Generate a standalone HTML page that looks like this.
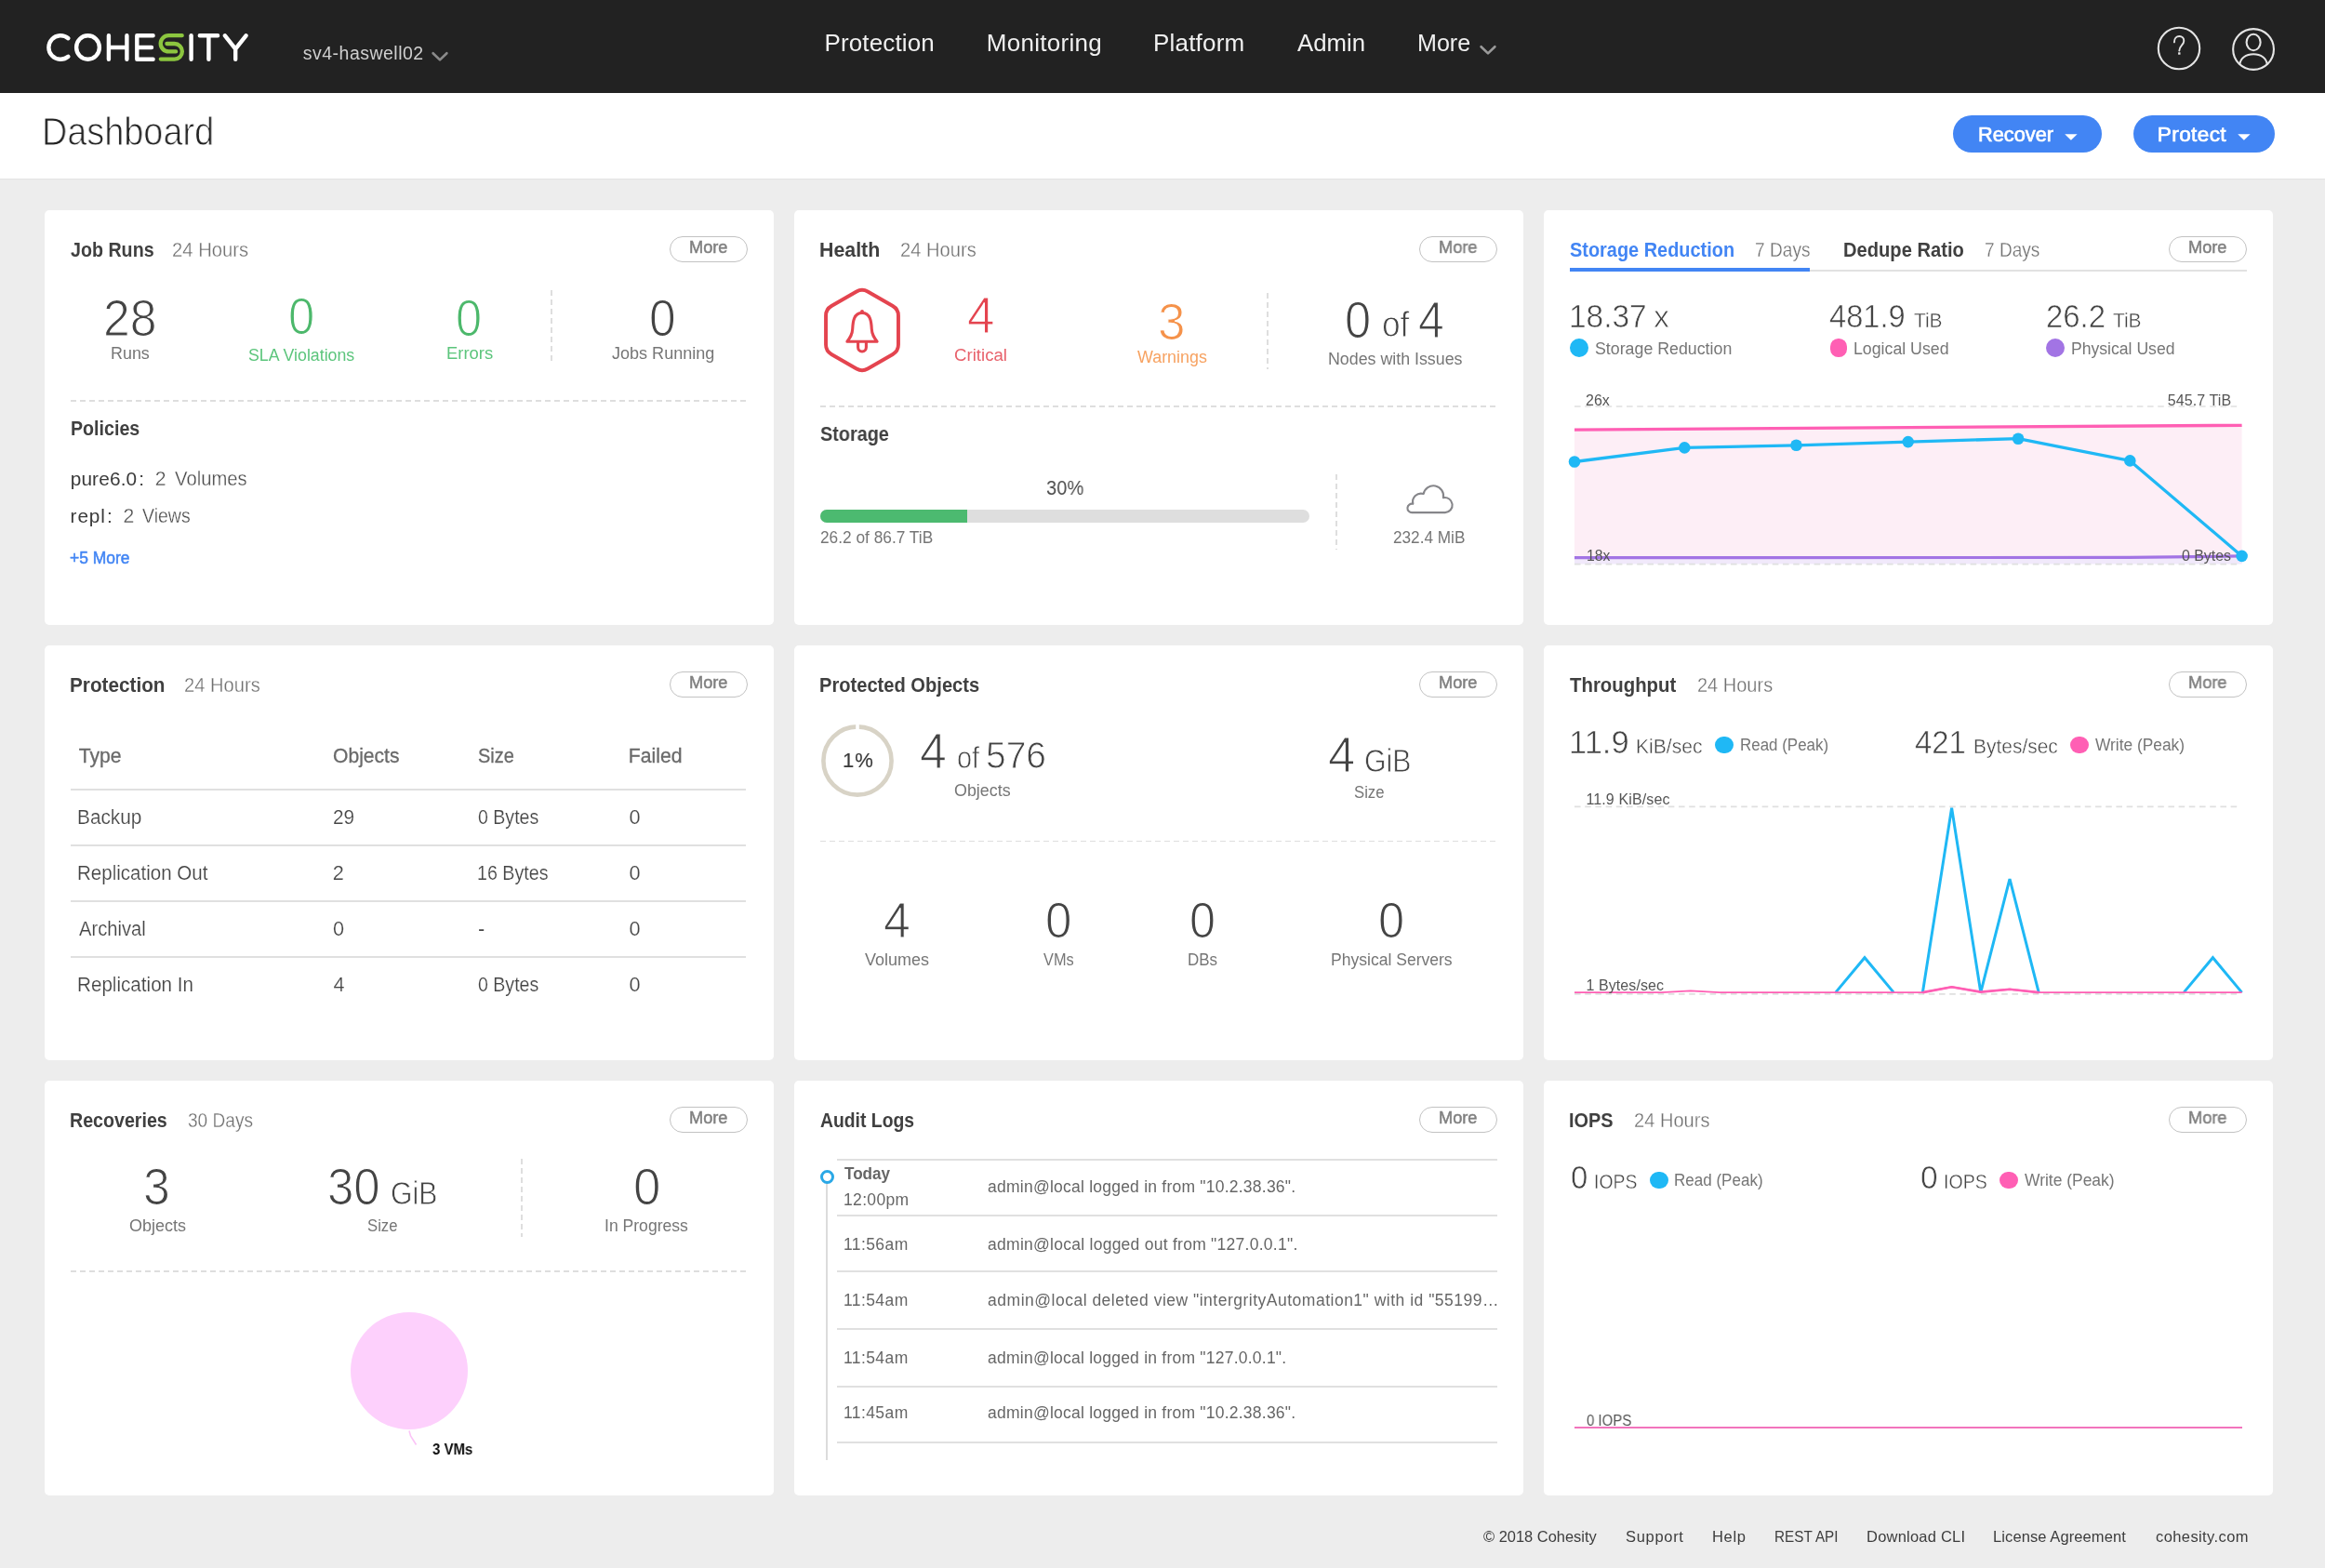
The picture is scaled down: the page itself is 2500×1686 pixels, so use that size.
<!DOCTYPE html>
<html lang="en"><head><meta charset="utf-8"><title>Cohesity Dashboard</title>
<style>
html,body{margin:0;padding:0}
body{width:2500px;height:1686px;overflow:hidden;background:#ededed;font-family:"Liberation Sans",sans-serif;position:relative;will-change:transform}
.t{position:absolute;white-space:nowrap;line-height:1;display:block;transform-origin:0 0}
.abs{position:absolute}
.nav{position:absolute;left:0;top:0;width:2500px;height:100px;background:#222}
.hdr{position:absolute;left:0;top:100px;width:2500px;height:92px;background:#fff;box-shadow:0 1px 1px rgba(0,0,0,.04)}
.card{position:absolute;background:#fff;border-radius:5px}
.more{position:absolute;box-sizing:border-box;border:1.6px solid #c2c2c2;border-radius:14px;background:#fff}
.hd{position:absolute;height:1.8px;background:repeating-linear-gradient(90deg,#dedede 0 6px,transparent 6px 10px)}
.vd{position:absolute;width:1.8px;background:repeating-linear-gradient(180deg,#dedede 0 6px,transparent 6px 10px)}
.hr{position:absolute;height:2px;background:#e0e0e0}
.dot{position:absolute;border-radius:50%}
.btn{position:absolute;border-radius:20px;background:#4285f4}
svg{position:absolute;overflow:visible}
</style></head><body>

<nav class="nav">
<svg style="left:0;top:0" width="300" height="100" viewBox="0 0 300 100" fill="none" stroke="#fff" stroke-width="4.4" stroke-linecap="round" stroke-linejoin="round">
<path d="M73.4,41.2 A12.8,12.8 0 1 0 73.4,60.8"/>
<ellipse cx="94.5" cy="51" rx="12.4" ry="12.7"/>
<path d="M116.9,38.3V63.7M136.4,38.3V63.7M116.9,51H136.4"/>
<path d="M164.6,38.3H147.3V63.7H164.6M147.3,51H163"/>
<path stroke="#8cc63f" stroke-width="4.3" d="M195.7,38.2H181.3A8.6,8.6 0 0 0 181.3,55.4H189.1M179.4,47H187.6A8.3,8.3 0 0 1 187.6,63.6H172.8"/>
<path d="M205.6,38.3V63.7"/>
<path d="M214.8,38.3H234.1M224.4,38.3V63.7"/>
<path d="M241.9,38.3L253.2,52.6L264.5,38.3M253.2,52.6V63.7"/>
</svg>
<span class="t" style="left:325.8px;top:46.0px;font-size:19.5px;line-height:22px;letter-spacing:0.48px;color:#cfcfcf;">sv4-haswell02</span>
<svg style="left:464px;top:55px" width="20" height="12" viewBox="0 0 20 12" fill="none" stroke="#8a8a8a" stroke-width="2.6" stroke-linecap="round" stroke-linejoin="round"><path d="M1.6,2.2L9,9.4L16.4,2.2"/></svg>
<span class="t" style="left:886.5px;top:31.0px;font-size:26.0px;line-height:30px;letter-spacing:0.13px;color:#f0f0f0;">Protection</span>
<span class="t" style="left:1060.8px;top:31.0px;font-size:26.0px;line-height:30px;letter-spacing:0.29px;color:#f0f0f0;">Monitoring</span>
<span class="t" style="left:1239.9px;top:31.0px;font-size:26.0px;line-height:30px;letter-spacing:0.22px;color:#f0f0f0;">Platform</span>
<span class="t" style="left:1395.2px;top:31.0px;font-size:26.0px;line-height:30px;transform:scaleX(0.9907);color:#f0f0f0;">Admin</span>
<span class="t" style="left:1523.9px;top:31.0px;font-size:26.0px;line-height:30px;transform:scaleX(0.9651);color:#f0f0f0;">More</span>
<svg style="left:1591px;top:48px" width="20" height="12" viewBox="0 0 20 12" fill="none" stroke="#9a9a9a" stroke-width="2.6" stroke-linecap="round" stroke-linejoin="round"><path d="M1.6,2.2L9,9.4L16.4,2.2"/></svg>
<svg style="left:2318px;top:26px" width="50" height="52" viewBox="0 0 50 52" fill="none" stroke="#e4e4e4" stroke-width="2.1" stroke-linecap="round"><circle cx="25" cy="26" r="22.2"/><path stroke-width="1.9" d="M19.9,19.4 C19.9,15.4 22.3,13 25.4,13 C28.5,13 30.3,15.3 30.3,17.9 C30.3,22.2 25.3,23.2 25.3,28.6"/><rect x="24.1" y="30.3" width="2.4" height="2.4" fill="#e4e4e4" stroke="none"/></svg>
<svg style="left:2398px;top:28px" width="50" height="50" viewBox="0 0 50 50" fill="none" stroke="#e4e4e4" stroke-width="2.1"><circle cx="25.05" cy="25" r="21.9"/><ellipse cx="25.1" cy="17.5" rx="7.5" ry="8.7"/><path d="M10.2,41.6 C11,34.6 17,30.2 25.05,30.2 C33.1,30.2 39.1,34.6 39.9,41.6"/></svg>
</nav>
<header class="hdr"></header>
<span class="t" style="left:44.9px;top:118.0px;font-size:41.9px;line-height:47px;transform:scaleX(0.9029);color:#222;-webkit-text-stroke:1.0px #fff;">Dashboard</span>
<div class="btn" style="left:2100px;top:124px;width:160px;height:40px"></div>
<span class="t" style="left:2126.9px;top:132.0px;font-size:22.6px;line-height:25px;transform:scaleX(0.9640);color:#fff;-webkit-text-stroke:0.7px #fff;">Recover</span>
<svg style="left:2220px;top:144px" width="16" height="10"><path d="M0.2,0.2L13.6,0.2L6.9,6.8Z" fill="#fff"/></svg>
<div class="btn" style="left:2294px;top:124px;width:152px;height:40px"></div>
<span class="t" style="left:2319.8px;top:132.0px;font-size:22.6px;line-height:25px;letter-spacing:0.37px;color:#fff;-webkit-text-stroke:0.7px #fff;">Protect</span>
<svg style="left:2406.2px;top:144px" width="16" height="10"><path d="M0.2,0.2L13.6,0.2L6.9,6.8Z" fill="#fff"/></svg>
<section class="card" style="left:48.0px;top:226.0px;width:784.2px;height:446.2px">
<span class="t" style="left:28.1px;top:30.0px;font-size:22.0px;line-height:25px;transform:scaleX(0.8937);font-weight:700;color:#404040;">Job Runs</span>
<span class="t" style="left:137.3px;top:30.0px;font-size:22.4px;line-height:25px;transform:scaleX(0.9041);color:#707070;-webkit-text-stroke:0.3px #fff;">24 Hours</span>
<div class="more" style="left:672.3px;top:28.0px;width:83.6px;height:28.1px"></div>
<span class="t" style="left:692.5px;top:29.0px;font-size:18.5px;line-height:21px;transform:scaleX(0.9846);color:#808080;-webkit-text-stroke:0.5px #808080;">More</span>
<span class="t" style="left:62.6px;top:85.0px;font-size:55.2px;line-height:62px;transform:scaleX(0.9375);color:#444;-webkit-text-stroke:1.2px #fff;">28</span>
<span class="t" style="left:70.5px;top:143.0px;font-size:18.8px;line-height:21px;transform:scaleX(0.9529);color:#767676;">Runs</span>
<span class="t" style="left:262.1px;top:83.0px;font-size:55.2px;line-height:62px;transform:scaleX(0.9196);color:#4cb86b;-webkit-text-stroke:1.2px #fff;">0</span>
<span class="t" style="left:218.9px;top:145.0px;font-size:18.8px;line-height:21px;transform:scaleX(0.9457);color:#5cc57c;">SLA Violations</span>
<span class="t" style="left:442.4px;top:85.0px;font-size:55.2px;line-height:62px;transform:scaleX(0.9158);color:#4cb86b;-webkit-text-stroke:1.2px #fff;">0</span>
<span class="t" style="left:431.5px;top:143.0px;font-size:18.8px;line-height:21px;transform:scaleX(0.9805);color:#5cc57c;">Errors</span>
<div class="vd" style="left:544.0px;top:85.8px;height:79.6px"></div>
<span class="t" style="left:649.9px;top:85.0px;font-size:55.2px;line-height:62px;transform:scaleX(0.9347);color:#444;-webkit-text-stroke:1.2px #fff;">0</span>
<span class="t" style="left:609.7px;top:143.0px;font-size:18.8px;line-height:21px;transform:scaleX(0.9605);color:#767676;">Jobs Running</span>
<div class="hd" style="left:27.7px;top:204.0px;width:728.3px"></div>
<span class="t" style="left:27.7px;top:223.0px;font-size:21.4px;line-height:24px;transform:scaleX(0.9183);font-weight:700;color:#404040;">Policies</span>
<span class="t" style="left:27.7px;top:277.0px;font-size:20.8px;line-height:23px;letter-spacing:0.15px;color:#3a3a3a;">pure6.0</span>
<span class="t" style="left:101.3px;top:277.0px;font-size:20.8px;line-height:23px;color:#3a3a3a;">:</span>
<span class="t" style="left:118.7px;top:277.0px;font-size:21.2px;line-height:23px;color:#4a4a4a;-webkit-text-stroke:0.3px #fff;">2</span>
<span class="t" style="left:139.9px;top:277.0px;font-size:21.2px;line-height:23px;transform:scaleX(0.9551);color:#4a4a4a;-webkit-text-stroke:0.3px #fff;">Volumes</span>
<span class="t" style="left:27.6px;top:317.0px;font-size:20.8px;line-height:23px;letter-spacing:0.86px;color:#3a3a3a;">repl</span>
<span class="t" style="left:66.9px;top:317.0px;font-size:20.8px;line-height:23px;color:#3a3a3a;">:</span>
<span class="t" style="left:84.4px;top:317.0px;font-size:21.2px;line-height:23px;color:#4a4a4a;-webkit-text-stroke:0.3px #fff;">2</span>
<span class="t" style="left:105.1px;top:317.0px;font-size:21.2px;line-height:23px;transform:scaleX(0.9213);color:#4a4a4a;-webkit-text-stroke:0.3px #fff;">Views</span>
<span class="t" style="left:27.3px;top:364.0px;font-size:17.5px;line-height:20px;transform:scaleX(0.9973);color:#4285f4;-webkit-text-stroke:0.5px #4285f4;">+5 More</span>
</section>
<section class="card" style="left:854.0px;top:226.0px;width:784.2px;height:446.2px">
<span class="t" style="left:27.0px;top:30.0px;font-size:22.0px;line-height:25px;transform:scaleX(0.9703);font-weight:700;color:#404040;">Health</span>
<span class="t" style="left:113.5px;top:30.0px;font-size:22.4px;line-height:25px;transform:scaleX(0.8996);color:#707070;-webkit-text-stroke:0.3px #fff;">24 Hours</span>
<div class="more" style="left:672.3px;top:28.0px;width:83.6px;height:28.1px"></div>
<span class="t" style="left:692.5px;top:29.0px;font-size:18.5px;line-height:21px;transform:scaleX(0.9846);color:#808080;-webkit-text-stroke:0.5px #808080;">More</span>
<svg style="left:22.9px;top:79.0px" width="100" height="100" viewBox="0 0 100 100" fill="none" stroke="#e4444f" stroke-linejoin="round" stroke-linecap="round">
<path stroke-width="3.9" d="M44.00,8.46 A12.00,12.00 0 0 1 56.00,8.46 L82.97,24.04 A12.00,12.00 0 0 1 88.97,34.43 L88.97,65.57 A12.00,12.00 0 0 1 82.97,75.96 L56.00,91.54 A12.00,12.00 0 0 1 44.00,91.54 L17.03,75.96 A12.00,12.00 0 0 1 11.03,65.57 L11.03,34.43 A12.00,12.00 0 0 1 17.03,24.04 Z"/>
<path stroke-width="3.1" d="M33.9,62.2 C37.1,58 39.4,55 39.7,49 C40.1,41 41.1,31.4 50,31.4 C58.9,31.4 59.9,41 60.3,49 C60.6,55 62.9,58 66.1,62.2 Z"/>
<path stroke-width="3.1" d="M45.6,63 V68.6 a4.4,4.4 0 0 0 8.8,0 V63"/>
<circle cx="50" cy="29.8" r="1.9" fill="#e4444f" stroke="none"/>
</svg>
<span class="t" style="left:185.6px;top:82.0px;font-size:55.2px;line-height:62px;transform:scaleX(0.9620);color:#e4444f;-webkit-text-stroke:1.2px #fff;">4</span>
<span class="t" style="left:172.0px;top:145.0px;font-size:18.8px;line-height:21px;transform:scaleX(0.9933);color:#e8626c;">Critical</span>
<span class="t" style="left:391.3px;top:89.0px;font-size:55.2px;line-height:62px;transform:scaleX(0.9617);color:#f5924a;-webkit-text-stroke:1.2px #fff;">3</span>
<span class="t" style="left:368.5px;top:147.0px;font-size:18.8px;line-height:21px;transform:scaleX(0.9517);color:#f7a261;">Warnings</span>
<div class="vd" style="left:508.0px;top:88.5px;height:82.2px"></div>
<span class="t" style="left:592.4px;top:87.0px;font-size:55.2px;line-height:62px;transform:scaleX(0.9158);color:#444;-webkit-text-stroke:1.2px #fff;">0</span>
<span class="t" style="left:632.2px;top:101.0px;font-size:39.2px;line-height:44px;transform:scaleX(0.8985);color:#444;-webkit-text-stroke:0.9px #fff;">of</span>
<span class="t" style="left:671.3px;top:87.0px;font-size:55.2px;line-height:62px;transform:scaleX(0.9045);color:#444;-webkit-text-stroke:1.2px #fff;">4</span>
<span class="t" style="left:573.5px;top:149.0px;font-size:18.8px;line-height:21px;transform:scaleX(0.9478);color:#767676;">Nodes with Issues</span>
<div class="hd" style="left:28.0px;top:209.9px;width:728.0px"></div>
<span class="t" style="left:28.1px;top:229.0px;font-size:21.5px;line-height:24px;transform:scaleX(0.9224);font-weight:700;color:#404040;">Storage</span>
<span class="t" style="left:270.9px;top:286.0px;font-size:22.0px;line-height:25px;transform:scaleX(0.9147);color:#4a4a4a;">30%</span>
<div style="position:absolute;left:28.0px;top:322.2px;width:525.8px;height:13.4px;background:#dedede;border-radius:7px;overflow:hidden"><div style="width:158px;height:100%;background:#4cba70"></div></div>
<span class="t" style="left:27.8px;top:341.0px;font-size:18.7px;line-height:21px;transform:scaleX(0.9257);color:#767676;">26.2 of 86.7 TiB</span>
<div class="vd" style="left:581.8px;top:283.6px;height:81.0px"></div>
<svg style="left:0;top:0" width="784" height="446" fill="none" stroke="#86868a" stroke-width="2.1" stroke-linejoin="round"><path d="M664.69,325.09 A4.73,4.73 0 1 1 665.35,315.82 A8.99,8.99 0 0 1 676.71,305.04 A10.69,10.69 0 0 1 697.90,309.20 A8.04,8.04 0 1 1 699.89,325.09 Z"/></svg>
<span class="t" style="left:644.1px;top:341.0px;font-size:18.7px;line-height:21px;transform:scaleX(0.9200);color:#767676;">232.4 MiB</span>
</section>
<section class="card" style="left:1660.0px;top:226.0px;width:784.2px;height:446.2px">
<span class="t" style="left:27.8px;top:30.0px;font-size:22.0px;line-height:25px;transform:scaleX(0.9055);font-weight:700;color:#4285f4;">Storage Reduction</span>
<span class="t" style="left:226.9px;top:30.0px;font-size:22.4px;line-height:25px;transform:scaleX(0.8553);color:#707070;-webkit-text-stroke:0.3px #fff;">7 Days</span>
<span class="t" style="left:321.7px;top:30.0px;font-size:22.0px;line-height:25px;transform:scaleX(0.9155);font-weight:700;color:#404040;">Dedupe Ratio</span>
<span class="t" style="left:473.9px;top:30.0px;font-size:22.4px;line-height:25px;transform:scaleX(0.8524);color:#707070;-webkit-text-stroke:0.3px #fff;">7 Days</span>
<div class="more" style="left:672.3px;top:28.0px;width:83.6px;height:28.1px"></div>
<span class="t" style="left:692.5px;top:29.0px;font-size:18.5px;line-height:21px;transform:scaleX(0.9846);color:#808080;-webkit-text-stroke:0.5px #808080;">More</span>
<div class="hr" style="left:28.7px;top:64.0px;width:726.9px;background:#e2e2e2"></div>
<div style="position:absolute;left:28.1px;top:62.0px;width:257.6px;height:4.0px;background:#4285f4"></div>
<span class="t" style="left:27.0px;top:95.0px;font-size:34.6px;line-height:38px;transform:scaleX(0.9673);color:#444;-webkit-text-stroke:0.6px #fff;">18.37</span>
<span class="t" style="left:118.0px;top:95.0px;font-size:34.1px;line-height:38px;color:#444;-webkit-text-stroke:0.8px #fff;">x</span>
<span class="t" style="left:307.0px;top:95.0px;font-size:34.6px;line-height:38px;transform:scaleX(0.9447);color:#444;-webkit-text-stroke:0.6px #fff;">481.9</span>
<span class="t" style="left:397.8px;top:106.0px;font-size:22.6px;line-height:25px;transform:scaleX(0.9224);color:#444;-webkit-text-stroke:0.4px #fff;">TiB</span>
<span class="t" style="left:539.6px;top:95.0px;font-size:34.6px;line-height:38px;transform:scaleX(0.9510);color:#444;-webkit-text-stroke:0.6px #fff;">26.2</span>
<span class="t" style="left:612.3px;top:106.0px;font-size:22.6px;line-height:25px;transform:scaleX(0.9224);color:#444;-webkit-text-stroke:0.4px #fff;">TiB</span>
<div class="dot" style="left:28.0px;top:137.9px;width:19.8px;height:19.8px;background:#1fb8f5"></div>
<span class="t" style="left:54.7px;top:138.0px;font-size:18.8px;line-height:21px;transform:scaleX(0.9468);color:#767676;">Storage Reduction</span>
<div class="abs" style="left:308.0px;top:138.0px;width:17.8px;height:19.7px;background:#ff5fb4;border-radius:8.6px"></div>
<span class="t" style="left:333.1px;top:138.0px;font-size:18.8px;line-height:21px;transform:scaleX(0.9439);color:#767676;">Logical Used</span>
<div class="dot" style="left:539.9px;top:138.0px;width:20.0px;height:20.0px;background:#a274e4"></div>
<span class="t" style="left:566.6px;top:138.0px;font-size:18.8px;line-height:21px;transform:scaleX(0.9367);color:#767676;">Physical Used</span>
<svg style="left:0;top:0" width="784" height="446" viewBox="0 0 784 446"><path d="M33.0,236.1 L750.6,231.3 L750.6,373.0 L33.0,374.0 Z" fill="#fdeef6"/><path d="M33.0,374.0 L750.6,372.0 L750.6,380.4 L33.0,380.4 Z" fill="#f1e9fb"/><path d="M33.0,211.0 H746.1" stroke="#e0e0e0" stroke-width="1.7" stroke-dasharray="6.6 4.6" fill="none"/><path d="M33.0,380.6 H746.1" stroke="#e0e0e0" stroke-width="1.7" stroke-dasharray="6.6 4.6" fill="none"/><polyline points="33.0,236.1 750.6,231.3" stroke="#ff5fb4" stroke-width="3.3" fill="none"/><polyline points="33.0,373.7 629.7,373.4 750.6,371.9" stroke="#a274e4" stroke-width="3.2" fill="none"/><polyline points="33.0,270.5 151.3,255.4 271.5,252.8 391.7,249.1 510.1,245.7 630.3,269.4 750.6,371.9" stroke="#1fb8f5" stroke-width="3.3" fill="none" stroke-linejoin="round"/><circle cx="33.0" cy="270.5" r="6.3" fill="#1fb8f5"/><circle cx="151.3" cy="255.4" r="6.3" fill="#1fb8f5"/><circle cx="271.5" cy="252.8" r="6.3" fill="#1fb8f5"/><circle cx="391.7" cy="249.1" r="6.3" fill="#1fb8f5"/><circle cx="510.1" cy="245.7" r="6.3" fill="#1fb8f5"/><circle cx="630.3" cy="269.4" r="6.3" fill="#1fb8f5"/><circle cx="750.6" cy="371.9" r="6.3" fill="#1fb8f5"/></svg>
<span class="t" style="left:45.4px;top:196.0px;font-size:16.0px;line-height:17px;transform:scaleX(0.9987);color:#555;">26x</span>
<span class="t" style="left:670.7px;top:196.0px;font-size:16.0px;line-height:17px;letter-spacing:0.11px;color:#555;">545.7 TiB</span>
<span class="t" style="left:45.8px;top:363.0px;font-size:16.0px;line-height:17px;transform:scaleX(0.9830);color:#555;">18x</span>
<span class="t" style="left:685.9px;top:363.0px;font-size:16.0px;line-height:17px;transform:scaleX(0.9931);color:#555;">0 Bytes</span>
</section>
<section class="card" style="left:48.0px;top:694.0px;width:784.2px;height:446.2px">
<span class="t" style="left:27.0px;top:30.0px;font-size:22.0px;line-height:25px;transform:scaleX(0.9417);font-weight:700;color:#404040;">Protection</span>
<span class="t" style="left:150.0px;top:30.0px;font-size:22.4px;line-height:25px;transform:scaleX(0.8996);color:#707070;-webkit-text-stroke:0.3px #fff;">24 Hours</span>
<div class="more" style="left:672.3px;top:28.0px;width:83.6px;height:28.1px"></div>
<span class="t" style="left:692.5px;top:29.0px;font-size:18.5px;line-height:21px;transform:scaleX(0.9846);color:#808080;-webkit-text-stroke:0.5px #808080;">More</span>
<span class="t" style="left:36.7px;top:107.0px;font-size:21.2px;line-height:23px;letter-spacing:0.01px;color:#6a6a6a;-webkit-text-stroke:0.3px #6a6a6a;">Type</span>
<span class="t" style="left:310.0px;top:107.0px;font-size:21.2px;line-height:23px;transform:scaleX(0.9956);color:#6a6a6a;-webkit-text-stroke:0.3px #6a6a6a;">Objects</span>
<span class="t" style="left:466.1px;top:107.0px;font-size:21.2px;line-height:23px;transform:scaleX(0.9403);color:#6a6a6a;-webkit-text-stroke:0.3px #6a6a6a;">Size</span>
<span class="t" style="left:627.7px;top:107.0px;font-size:21.2px;line-height:23px;letter-spacing:0.05px;color:#6a6a6a;-webkit-text-stroke:0.3px #6a6a6a;">Failed</span>
<div class="hr" style="left:28.0px;top:153.9px;width:725.7px;background:#e0e0e0"></div>
<span class="t" style="left:35.4px;top:172.0px;font-size:21.7px;line-height:25px;transform:scaleX(0.9599);color:#454545;-webkit-text-stroke:0.2px #fff;">Backup</span>
<span class="t" style="left:309.8px;top:172.0px;font-size:21.7px;line-height:25px;transform:scaleX(0.9582);color:#454545;-webkit-text-stroke:0.2px #fff;">29</span>
<span class="t" style="left:466.1px;top:172.0px;font-size:21.7px;line-height:25px;transform:scaleX(0.9020);color:#454545;-webkit-text-stroke:0.2px #fff;">0 Bytes</span>
<span class="t" style="left:628.4px;top:172.0px;font-size:21.7px;line-height:25px;color:#454545;-webkit-text-stroke:0.2px #fff;">0</span>
<div class="hr" style="left:28.0px;top:214.2px;width:725.7px;background:#e0e0e0"></div>
<span class="t" style="left:35.4px;top:232.0px;font-size:21.7px;line-height:25px;transform:scaleX(0.9475);color:#454545;-webkit-text-stroke:0.2px #fff;">Replication Out</span>
<span class="t" style="left:309.8px;top:232.0px;font-size:21.7px;line-height:25px;color:#454545;-webkit-text-stroke:0.2px #fff;">2</span>
<span class="t" style="left:465.4px;top:232.0px;font-size:21.7px;line-height:25px;transform:scaleX(0.9071);color:#454545;-webkit-text-stroke:0.2px #fff;">16 Bytes</span>
<span class="t" style="left:628.4px;top:232.0px;font-size:21.7px;line-height:25px;color:#454545;-webkit-text-stroke:0.2px #fff;">0</span>
<div class="hr" style="left:28.0px;top:274.2px;width:725.7px;background:#e0e0e0"></div>
<span class="t" style="left:37.0px;top:292.0px;font-size:21.7px;line-height:25px;transform:scaleX(0.9285);color:#454545;-webkit-text-stroke:0.2px #fff;">Archival</span>
<span class="t" style="left:310.0px;top:292.0px;font-size:21.7px;line-height:25px;color:#454545;-webkit-text-stroke:0.2px #fff;">0</span>
<span class="t" style="left:465.9px;top:292.0px;font-size:21.7px;line-height:25px;color:#454545;-webkit-text-stroke:0.2px #fff;">-</span>
<span class="t" style="left:628.4px;top:292.0px;font-size:21.7px;line-height:25px;color:#454545;-webkit-text-stroke:0.2px #fff;">0</span>
<div class="hr" style="left:28.0px;top:334.2px;width:725.7px;background:#e0e0e0"></div>
<span class="t" style="left:35.4px;top:352.0px;font-size:21.7px;line-height:25px;transform:scaleX(0.9515);color:#454545;-webkit-text-stroke:0.2px #fff;">Replication In</span>
<span class="t" style="left:310.4px;top:352.0px;font-size:21.7px;line-height:25px;color:#454545;-webkit-text-stroke:0.2px #fff;">4</span>
<span class="t" style="left:466.1px;top:352.0px;font-size:21.7px;line-height:25px;transform:scaleX(0.9020);color:#454545;-webkit-text-stroke:0.2px #fff;">0 Bytes</span>
<span class="t" style="left:628.4px;top:352.0px;font-size:21.7px;line-height:25px;color:#454545;-webkit-text-stroke:0.2px #fff;">0</span>
</section>
<section class="card" style="left:854.0px;top:694.0px;width:784.2px;height:446.2px">
<span class="t" style="left:27.1px;top:30.0px;font-size:22.0px;line-height:25px;transform:scaleX(0.9143);font-weight:700;color:#404040;">Protected Objects</span>
<div class="more" style="left:672.3px;top:28.0px;width:83.6px;height:28.1px"></div>
<span class="t" style="left:692.5px;top:29.0px;font-size:18.5px;line-height:21px;transform:scaleX(0.9846);color:#808080;-webkit-text-stroke:0.5px #808080;">More</span>
<svg style="left:25.8px;top:81.9px" width="84" height="84" viewBox="0 0 84 84" fill="none"><circle cx="42" cy="42" r="36.6" stroke="#d8d3c6" stroke-width="4.6"/><path d="M42,2V9" stroke="#fff" stroke-width="3.6"/></svg>
<span class="t" style="left:52.0px;top:111.0px;font-size:22.0px;line-height:25px;letter-spacing:0.95px;color:#3a3a3a;-webkit-text-stroke:0.2px #3a3a3a;">1%</span>
<span class="t" style="left:135.3px;top:83.0px;font-size:54.2px;line-height:60px;transform:scaleX(0.9578);color:#444;-webkit-text-stroke:1.2px #fff;">4</span>
<span class="t" style="left:174.9px;top:101.0px;font-size:34.1px;line-height:38px;letter-spacing:-0.03px;transform:scaleX(0.8500);color:#444;-webkit-text-stroke:0.8px #fff;">of</span>
<span class="t" style="left:205.5px;top:95.0px;font-size:40.8px;line-height:46px;transform:scaleX(0.9537);color:#444;-webkit-text-stroke:0.9px #fff;">576</span>
<span class="t" style="left:172.2px;top:145.0px;font-size:18.8px;line-height:21px;transform:scaleX(0.9522);color:#767676;">Objects</span>
<span class="t" style="left:573.9px;top:87.0px;font-size:54.2px;line-height:60px;transform:scaleX(0.9688);color:#444;-webkit-text-stroke:1.2px #fff;">4</span>
<span class="t" style="left:613.3px;top:104.0px;font-size:35.1px;line-height:39px;transform:scaleX(0.8626);color:#444;-webkit-text-stroke:0.8px #fff;">GiB</span>
<span class="t" style="left:602.4px;top:147.0px;font-size:18.8px;line-height:21px;transform:scaleX(0.8884);color:#767676;">Size</span>
<div class="hd" style="left:28.0px;top:209.7px;width:728.0px"></div>
<span class="t" style="left:96.1px;top:265.0px;font-size:54.2px;line-height:60px;transform:scaleX(0.9578);color:#444;-webkit-text-stroke:1.2px #fff;">4</span>
<span class="t" style="left:76.2px;top:327.0px;font-size:18.8px;line-height:21px;transform:scaleX(0.9587);color:#767676;">Volumes</span>
<span class="t" style="left:269.8px;top:265.0px;font-size:54.2px;line-height:60px;transform:scaleX(0.9443);color:#444;-webkit-text-stroke:1.2px #fff;">0</span>
<span class="t" style="left:267.9px;top:327.0px;font-size:18.8px;line-height:21px;transform:scaleX(0.8684);color:#767676;">VMs</span>
<span class="t" style="left:425.0px;top:265.0px;font-size:54.2px;line-height:60px;transform:scaleX(0.9289);color:#444;-webkit-text-stroke:1.2px #fff;">0</span>
<span class="t" style="left:422.6px;top:327.0px;font-size:18.8px;line-height:21px;transform:scaleX(0.9010);color:#767676;">DBs</span>
<span class="t" style="left:628.4px;top:265.0px;font-size:54.2px;line-height:60px;transform:scaleX(0.9327);color:#444;-webkit-text-stroke:1.2px #fff;">0</span>
<span class="t" style="left:577.1px;top:327.0px;font-size:18.8px;line-height:21px;transform:scaleX(0.9341);color:#767676;">Physical Servers</span>
</section>
<section class="card" style="left:1660.0px;top:694.0px;width:784.2px;height:446.2px">
<span class="t" style="left:28.2px;top:30.0px;font-size:22.0px;line-height:25px;transform:scaleX(0.9260);font-weight:700;color:#404040;">Throughput</span>
<span class="t" style="left:165.2px;top:30.0px;font-size:22.4px;line-height:25px;transform:scaleX(0.8929);color:#707070;-webkit-text-stroke:0.3px #fff;">24 Hours</span>
<div class="more" style="left:672.3px;top:28.0px;width:83.6px;height:28.1px"></div>
<span class="t" style="left:692.5px;top:29.0px;font-size:18.5px;line-height:21px;transform:scaleX(0.9846);color:#808080;-webkit-text-stroke:0.5px #808080;">More</span>
<span class="t" style="left:27.4px;top:85.0px;font-size:34.6px;line-height:38px;transform:scaleX(0.9988);color:#444;-webkit-text-stroke:0.6px #fff;">11.9</span>
<span class="t" style="left:99.4px;top:96.0px;font-size:22.6px;line-height:25px;transform:scaleX(0.9334);color:#444;-webkit-text-stroke:0.4px #fff;">KiB/sec</span>
<div class="abs" style="left:184.0px;top:97.7px;width:20.0px;height:18.2px;background:#1fb8f5;border-radius:9.0px"></div>
<span class="t" style="left:210.6px;top:96.0px;font-size:18.8px;line-height:21px;transform:scaleX(0.9024);color:#767676;">Read (Peak)</span>
<span class="t" style="left:399.2px;top:85.0px;font-size:34.6px;line-height:38px;transform:scaleX(0.9522);color:#444;-webkit-text-stroke:0.6px #fff;">421</span>
<span class="t" style="left:461.9px;top:96.0px;font-size:22.6px;line-height:25px;transform:scaleX(0.9272);color:#444;-webkit-text-stroke:0.4px #fff;">Bytes/sec</span>
<div class="abs" style="left:566.3px;top:97.7px;width:19.6px;height:18.2px;background:#ff5fb4;border-radius:9.0px"></div>
<span class="t" style="left:593.2px;top:96.0px;font-size:18.8px;line-height:21px;transform:scaleX(0.9235);color:#767676;">Write (Peak)</span>
<svg style="left:0;top:0" width="784" height="446" viewBox="0 0 784 446" fill="none"><path d="M33.0,173.4 H746.1" stroke="#e0e0e0" stroke-width="1.7" stroke-dasharray="6.6 4.6"/><path d="M33.0,374.8 H746.1" stroke="#e0e0e0" stroke-width="1.7" stroke-dasharray="6.6 4.6"/><polyline points="313.8,373.1 345.0,335.7 376.2,373.1" stroke="#1fb8f5" stroke-width="3" stroke-linejoin="miter"/><polyline points="407.4,373.1 438.6,174.8 469.8,373.1 501.0,251.0 532.2,373.1" stroke="#1fb8f5" stroke-width="3" stroke-linejoin="miter"/><polyline points="688.2,373.1 719.4,335.7 750.6,373.1" stroke="#1fb8f5" stroke-width="3" stroke-linejoin="miter"/><polyline points="33.0,373.1 126.6,373.1 157.8,371.4 189.0,373.1 407.4,373.1 438.6,367.2 469.8,372.6 501.0,369.8 532.2,373.1 750.6,373.1" stroke="#ff5fb4" stroke-width="1.9" stroke-linejoin="round"/><polyline points="407.4,373.1 438.6,367.2 469.8,372.6 501.0,369.8 532.2,373.1" stroke="#ff5fb4" stroke-width="2.6" stroke-linejoin="round"/></svg>
<span class="t" style="left:45.4px;top:157.0px;font-size:16.0px;line-height:17px;letter-spacing:0.13px;color:#555;">11.9 KiB/sec</span>
<span class="t" style="left:45.4px;top:357.0px;font-size:16.0px;line-height:17px;letter-spacing:0.10px;color:#555;">1 Bytes/sec</span>
</section>
<section class="card" style="left:48.0px;top:1162.0px;width:784.2px;height:446.2px">
<span class="t" style="left:27.1px;top:30.0px;font-size:22.0px;line-height:25px;transform:scaleX(0.8924);font-weight:700;color:#404040;">Recoveries</span>
<span class="t" style="left:153.6px;top:30.0px;font-size:22.4px;line-height:25px;transform:scaleX(0.8527);color:#707070;-webkit-text-stroke:0.3px #fff;">30 Days</span>
<div class="more" style="left:672.3px;top:28.0px;width:83.6px;height:28.1px"></div>
<span class="t" style="left:692.5px;top:29.0px;font-size:18.5px;line-height:21px;transform:scaleX(0.9846);color:#808080;-webkit-text-stroke:0.5px #808080;">More</span>
<span class="t" style="left:106.3px;top:83.0px;font-size:55.2px;line-height:62px;transform:scaleX(0.9388);color:#444;-webkit-text-stroke:1.2px #fff;">3</span>
<span class="t" style="left:90.9px;top:145.0px;font-size:18.8px;line-height:21px;transform:scaleX(0.9586);color:#767676;">Objects</span>
<span class="t" style="left:304.1px;top:83.0px;font-size:55.2px;line-height:62px;transform:scaleX(0.9238);color:#444;-webkit-text-stroke:1.2px #fff;">30</span>
<span class="t" style="left:371.6px;top:101.0px;font-size:35.1px;line-height:39px;transform:scaleX(0.8608);color:#444;-webkit-text-stroke:0.8px #fff;">GiB</span>
<span class="t" style="left:346.8px;top:145.0px;font-size:18.8px;line-height:21px;transform:scaleX(0.8884);color:#767676;">Size</span>
<div class="vd" style="left:511.8px;top:83.8px;height:84.1px"></div>
<span class="t" style="left:632.6px;top:83.0px;font-size:55.2px;line-height:62px;transform:scaleX(0.9574);color:#444;-webkit-text-stroke:1.2px #fff;">0</span>
<span class="t" style="left:602.3px;top:145.0px;font-size:18.8px;line-height:21px;transform:scaleX(0.9358);color:#767676;">In Progress</span>
<div class="hd" style="left:27.7px;top:203.8px;width:728.3px"></div>
<div class="dot" style="left:329.0px;top:248.7px;width:126.0px;height:126.0px;background:#fdd0fc"></div>
<svg style="left:390.0px;top:375.0px" width="14" height="20" viewBox="0 0 14 20"><path d="M2,1.5L3.5,7L9.5,16.5" stroke="#fbc4f7" stroke-width="1.6" fill="none"/></svg>
<span class="t" style="left:416.7px;top:386.0px;font-size:17.3px;line-height:20px;transform:scaleX(0.8666);font-weight:700;color:#111;">3 VMs</span>
</section>
<section class="card" style="left:854.0px;top:1162.0px;width:784.2px;height:446.2px">
<span class="t" style="left:27.9px;top:30.0px;font-size:22.0px;line-height:25px;transform:scaleX(0.8797);font-weight:700;color:#404040;">Audit Logs</span>
<div class="more" style="left:672.3px;top:28.0px;width:83.6px;height:28.1px"></div>
<span class="t" style="left:692.5px;top:29.0px;font-size:18.5px;line-height:21px;transform:scaleX(0.9846);color:#808080;-webkit-text-stroke:0.5px #808080;">More</span>
<div style="position:absolute;left:34.0px;top:109.7px;width:2.0px;height:298.5px;background:#dcdcdc"></div>
<div class="hr" style="left:46.3px;top:83.6px;width:709.3px;background:#e0e0e0"></div>
<div class="hr" style="left:46.3px;top:144.0px;width:709.3px;background:#e0e0e0"></div>
<div class="hr" style="left:46.3px;top:204.0px;width:709.3px;background:#e0e0e0"></div>
<div class="hr" style="left:46.3px;top:265.7px;width:709.3px;background:#e0e0e0"></div>
<div class="hr" style="left:46.3px;top:328.2px;width:709.3px;background:#e0e0e0"></div>
<div class="hr" style="left:46.3px;top:387.9px;width:709.3px;background:#e0e0e0"></div>
<div class="dot" style="left:28.3px;top:95.6px;width:9px;height:9px;border:3px solid #2aa8e6;background:#fff"></div>
<span class="t" style="left:54.1px;top:90.0px;font-size:17.5px;line-height:20px;transform:scaleX(0.9771);font-weight:700;color:#666;">Today</span>
<span class="t" style="left:53.0px;top:118.0px;font-size:17.5px;line-height:20px;letter-spacing:0.33px;color:#666;">12:00pm</span>
<span class="t" style="left:208.1px;top:104.0px;font-size:17.5px;line-height:20px;letter-spacing:0.23px;color:#666;">admin@local logged in from "10.2.38.36".</span>
<span class="t" style="left:53.0px;top:166.0px;font-size:17.5px;line-height:20px;letter-spacing:0.40px;color:#666;">11:56am</span>
<span class="t" style="left:208.1px;top:166.0px;font-size:17.5px;line-height:20px;letter-spacing:0.26px;color:#666;">admin@local logged out from "127.0.0.1".</span>
<span class="t" style="left:53.0px;top:226.0px;font-size:17.5px;line-height:20px;letter-spacing:0.40px;color:#666;">11:54am</span>
<span class="t" style="left:208.1px;top:226.0px;font-size:17.5px;line-height:20px;letter-spacing:0.50px;color:#666;">admin@local deleted view "intergrityAutomation1" with id "55199…</span>
<span class="t" style="left:53.0px;top:288.0px;font-size:17.5px;line-height:20px;letter-spacing:0.40px;color:#666;">11:54am</span>
<span class="t" style="left:208.1px;top:288.0px;font-size:17.5px;line-height:20px;letter-spacing:0.23px;color:#666;">admin@local logged in from "127.0.0.1".</span>
<span class="t" style="left:53.0px;top:347.0px;font-size:17.5px;line-height:20px;letter-spacing:0.40px;color:#666;">11:45am</span>
<span class="t" style="left:208.1px;top:347.0px;font-size:17.5px;line-height:20px;letter-spacing:0.23px;color:#666;">admin@local logged in from "10.2.38.36".</span>
</section>
<section class="card" style="left:1660.0px;top:1162.0px;width:784.2px;height:446.2px">
<span class="t" style="left:27.1px;top:30.0px;font-size:22.0px;line-height:25px;transform:scaleX(0.9051);font-weight:700;color:#404040;">IOPS</span>
<span class="t" style="left:96.8px;top:30.0px;font-size:22.4px;line-height:25px;transform:scaleX(0.8962);color:#707070;-webkit-text-stroke:0.3px #fff;">24 Hours</span>
<div class="more" style="left:672.3px;top:28.0px;width:83.6px;height:28.1px"></div>
<span class="t" style="left:692.5px;top:29.0px;font-size:18.5px;line-height:21px;transform:scaleX(0.9846);color:#808080;-webkit-text-stroke:0.5px #808080;">More</span>
<span class="t" style="left:28.7px;top:85.0px;font-size:34.6px;line-height:38px;transform:scaleX(0.9524);color:#444;-webkit-text-stroke:0.6px #fff;">0</span>
<span class="t" style="left:53.8px;top:96.0px;font-size:22.6px;line-height:25px;transform:scaleX(0.8580);color:#444;-webkit-text-stroke:0.4px #fff;">IOPS</span>
<div class="abs" style="left:114.0px;top:97.9px;width:20.0px;height:18.2px;background:#1fb8f5;border-radius:9.0px"></div>
<span class="t" style="left:139.9px;top:96.0px;font-size:18.8px;line-height:21px;transform:scaleX(0.9063);color:#767676;">Read (Peak)</span>
<span class="t" style="left:404.9px;top:85.0px;font-size:34.6px;line-height:38px;transform:scaleX(0.9705);color:#444;-webkit-text-stroke:0.6px #fff;">0</span>
<span class="t" style="left:430.0px;top:96.0px;font-size:22.6px;line-height:25px;transform:scaleX(0.8678);color:#444;-webkit-text-stroke:0.4px #fff;">IOPS</span>
<div class="abs" style="left:490.0px;top:97.9px;width:19.8px;height:18.2px;background:#ff5fb4;border-radius:9.0px"></div>
<span class="t" style="left:516.9px;top:96.0px;font-size:18.8px;line-height:21px;transform:scaleX(0.9283);color:#767676;">Write (Peak)</span>
<div style="position:absolute;left:33.3px;top:371.7px;width:717.6px;height:2.0px;background:#f274bd"></div>
<span class="t" style="left:46.0px;top:357.0px;font-size:16.0px;line-height:17px;transform:scaleX(0.9355);color:#555;">0 IOPS</span>
</section>
<footer>
<span class="t" style="left:1594.5px;top:1643.0px;font-size:16.5px;line-height:18px;transform:scaleX(0.9963);color:#3d3d3d;">© 2018 Cohesity</span>
<span class="t" style="left:1748.0px;top:1643.0px;font-size:16.5px;line-height:18px;letter-spacing:0.69px;color:#3d3d3d;">Support</span>
<span class="t" style="left:1840.9px;top:1643.0px;font-size:16.5px;line-height:18px;letter-spacing:0.73px;color:#3d3d3d;">Help</span>
<span class="t" style="left:1908.3px;top:1643.0px;font-size:16.5px;line-height:18px;transform:scaleX(0.9267);color:#3d3d3d;">REST API</span>
<span class="t" style="left:2007.0px;top:1643.0px;font-size:16.5px;line-height:18px;letter-spacing:0.22px;color:#3d3d3d;">Download CLI</span>
<span class="t" style="left:2143.1px;top:1643.0px;font-size:16.5px;line-height:18px;letter-spacing:0.09px;color:#3d3d3d;">License Agreement</span>
<span class="t" style="left:2318.0px;top:1643.0px;font-size:16.5px;line-height:18px;letter-spacing:0.40px;color:#3d3d3d;">cohesity.com</span>
</footer>
</body></html>
